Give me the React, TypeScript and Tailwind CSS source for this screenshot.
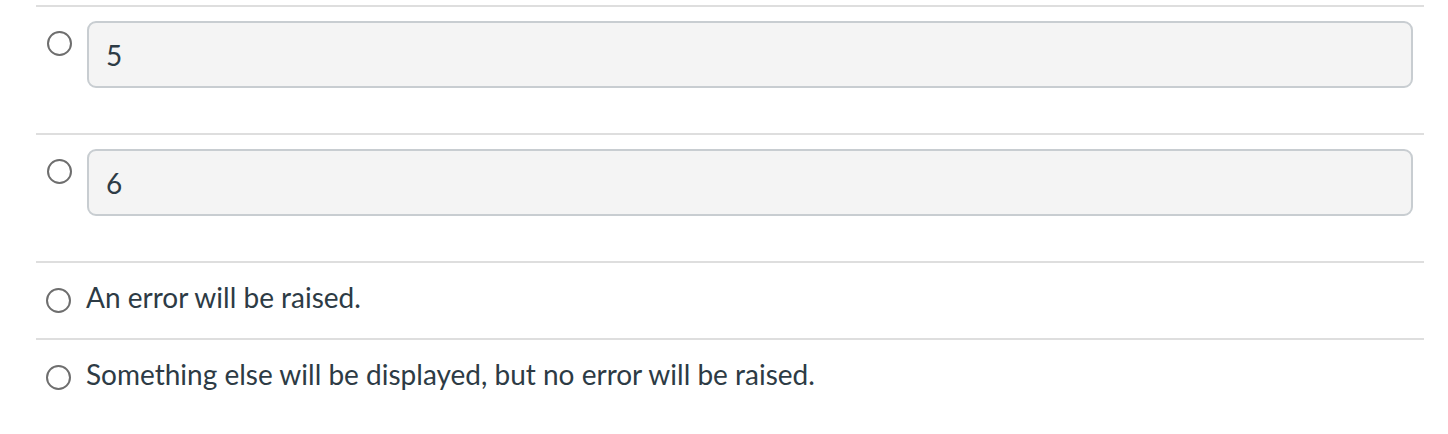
import React from "react";

function Radio({ className = "" }: { className?: string }) {
  return (
    <span
      className={
        "block w-[25px] h-[25px] shrink-0 rounded-full border-2 border-[#6e6e6e] bg-white " +
        className
      }
    />
  );
}

function BoxOption({ value }: { value: string }) {
  return (
    <div className="flex flex-col">
      <div className="h-[2px] bg-[#dedede]" />
      <div className="flex items-start pt-[14px] pb-[45px] pl-[11px] pr-[11px]">
        <Radio className="mt-[10px]" />
        <div className="ml-[15px] flex-1 h-[67px] rounded-[9px] border-2 border-[#c8cdd1] bg-[#f4f4f4] flex items-center pl-[17px] text-[28px] leading-[42px] text-[#2d3b45]">
          {value}
        </div>
      </div>
    </div>
  );
}

function TextOption({ label }: { label: string }) {
  return (
    <div className="flex flex-col">
      <div className="h-[2px] bg-[#dedede]" />
      <div className="flex items-start pt-[13px] pb-[20px] pl-[10px]">
        <Radio className="mt-[12px]" />
        <span className="ml-[15px] text-[28px] leading-[42px] text-[#2d3b45]">{label}</span>
      </div>
    </div>
  );
}

export default function App() {
  return (
    <div
      className="w-[1448px] h-[434px] bg-white overflow-hidden"
      style={{ fontFamily: "Lato, 'Liberation Sans', sans-serif" }}
    >
      <div className="ml-[36px] w-[1388px] pt-[5px]">
        <BoxOption value="5" />
        <BoxOption value="6" />
        <TextOption label="An error will be raised." />
        <TextOption label="Something else will be displayed, but no error will be raised." />
      </div>
    </div>
  );
}
